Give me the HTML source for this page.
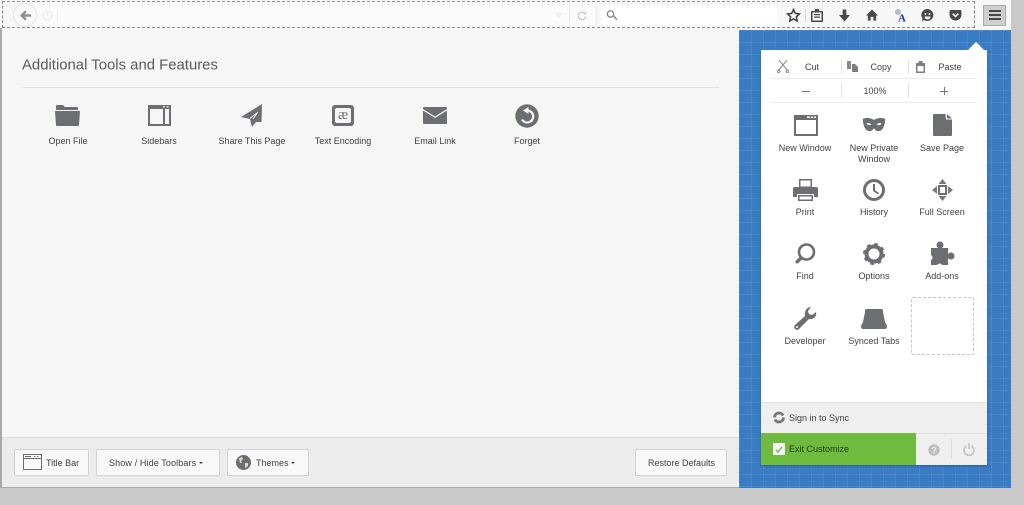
<!DOCTYPE html>
<html><head><meta charset="utf-8"><style>
html,body{margin:0;padding:0}
body{width:1024px;height:505px;overflow:hidden;position:relative;background:#c9c9c9;font-family:"Liberation Sans",sans-serif;color:#333}
div,svg{position:absolute}
.t{position:absolute;font-size:9px;line-height:11px;text-align:center;color:#3f3f3f;white-space:nowrap;transform:translateX(-50%)}
.btn{background:#f8f8f8;border:1px solid #d2d2d2;border-radius:2px;box-sizing:border-box;top:449px;height:27px}
.l{position:absolute;font-size:9px;line-height:11px;color:#3f3f3f;white-space:nowrap}
svg{fill:#6d6e72;filter:blur(.3px)}
.t,.l{filter:blur(.2px)}
</style></head><body>
<div style="left:0;top:0;width:1011px;height:30px;background:#f7f7f7"></div>
<div style="left:0;top:28px;width:2px;height:460px;background:#a9a9a9"></div>
<div style="left:2px;top:30px;width:737px;height:407px;background:#f6f6f6"></div>
<div style="left:2px;top:437px;width:737px;height:51px;background:#ececec;border-top:1px solid #dcdcdc;box-sizing:border-box;border-bottom:1px solid #aaa"></div>
<div style="left:739px;top:30px;width:272px;height:458px;background-color:#3a7cc3;background-image:linear-gradient(rgba(255,255,255,.07) 1px,transparent 1px),linear-gradient(90deg,rgba(255,255,255,.07) 1px,transparent 1px);background-size:12px 12px"></div>

<!-- toolbar -->
<div style="left:2px;top:1px;width:973px;height:27px;border:1px dashed #8c8c8c;box-sizing:border-box"></div>
<div style="left:25px;top:5px;width:570px;height:20px;background:#fbfbfb"></div>
<div style="left:13px;top:3px;width:24px;height:24px;border-radius:50%;background:#f9f9f9;border:1px solid #e4e4e4;box-sizing:border-box"></div>
<svg style="left:20px;top:10px" width="11" height="11" viewBox="0 0 13 12"><path d="M6 0l2 2-2.500 2.500H13v3H5.500L8 10l-2 2-6-6z" fill="#8f8f8f"/></svg>
<svg style="left:42px;top:10px" width="11" height="11" viewBox="0 0 12 12"><circle cx="6" cy="6" r="5" fill="none" stroke="#e8e8e8" stroke-width="1.300"/><path d="M5.300 3h1.400v4H5.300z" fill="#e8e8e8"/></svg>
<div style="left:57px;top:9px;width:1px;height:13px;background:#ececec"></div>
<svg style="left:555px;top:13px" width="7" height="5" viewBox="0 0 7 5"><path d="M0 0h7L3.500 5z" fill="#ececec"/></svg>
<div style="left:569px;top:9px;width:1px;height:13px;background:#e6e6e6"></div>
<svg style="left:577px;top:11px" width="10" height="10" viewBox="0 0 12 11"><path d="M9.500 2.500A4.500 4.500 0 1 0 10.500 6" fill="none" stroke="#c4c4c4" stroke-width="1.400"/><path d="M7 3.500h4V0z" fill="#c4c4c4"/></svg>
<div style="left:596px;top:6px;width:1px;height:19px;background:#ececec"></div>
<div style="left:601px;top:5px;width:176px;height:20px;background:#fff"></div>
<svg style="left:606px;top:10px" width="12" height="11" viewBox="0 0 12 11"><circle cx="4.500" cy="4" r="3.200" fill="none" stroke="#8d8d8d" stroke-width="1.400"/><path d="M6.800 6.300l1.200-1 3.500 3.800-1.300 1.200z" fill="#8d8d8d"/></svg>
<svg style="left:786px;top:8px" width="15" height="15" viewBox="0 0 15 15"><path d="M7.500 1.500l1.800 3.900 4.200.5-3.100 2.900.8 4.200-3.700-2.100-3.700 2.100.8-4.200L1.500 5.900l4.200-.5z" fill="none" stroke="#3f3f42" stroke-width="1.500"/></svg>
<div style="left:805px;top:9px;width:1px;height:13px;background:#d5d5d5"></div>
<svg style="left:811px;top:9px" width="12" height="13" viewBox="0 0 12 13"><path d="M4 0h4v2h3a1 1 0 0 1 1 1v9a1 1 0 0 1-1 1H1a1 1 0 0 1-1-1V3a1 1 0 0 1 1-1h3zM1.500 3.500v8h9v-8zM3 5h6v1.200H3zM3 7.500h6v1.200H3z" fill="#48484b" fill-rule="evenodd"/></svg>
<svg style="left:839px;top:9px" width="11" height="13" viewBox="0 0 12 13"><path d="M4 0h4v6h4l-6 7-6-7h4z" fill="#48484b"/></svg>
<svg style="left:866px;top:9px" width="12" height="13" viewBox="0 0 13 13"><path d="M6.500 0L13 6.500h-2V12H8V8H5v4H2V6.500H0z" fill="#48484b"/></svg>
<svg style="left:893px;top:8px" width="14" height="15" viewBox="0 0 14 15"><circle cx="5" cy="4" r="3" fill="#b8bcc4"/><text x="5" y="13.500" font-family="Liberation Serif" font-size="11" font-weight="bold" style="fill:#2433a8">A</text></svg>
<svg style="left:921px;top:9px" width="13" height="13" viewBox="0 0 13 13"><path d="M6.500 0a6 6 0 1 1-3.500 11L1 12.500l.5-3A6 6 0 0 1 6.500 0z" fill="#48484b"/><circle cx="4.500" cy="5" r="1" fill="#f7f7f7"/><circle cx="8.500" cy="5" r="1" fill="#f7f7f7"/><path d="M3.500 7.500h6a3 3 0 0 1-6 0z" fill="#f7f7f7"/></svg>
<svg style="left:949px;top:10px" width="13" height="11" viewBox="0 0 13 12"><path d="M1.500 0h10A1.500 1.500 0 0 1 13 1.500V5A6.500 6.500 0 0 1 0 5V1.500A1.500 1.500 0 0 1 1.500 0z" fill="#48484b"/><path d="M3.500 4l3 3 3-3" fill="none" stroke="#f7f7f7" stroke-width="1.800"/></svg>
<div style="left:983px;top:5px;width:23px;height:21px;background:#cfcfcf;border:1px solid #a8a8a8;box-sizing:border-box"></div>
<div style="left:989px;top:10px;width:12px;height:2px;background:#47474a"></div>
<div style="left:989px;top:14px;width:12px;height:2px;background:#47474a"></div>
<div style="left:989px;top:18px;width:12px;height:2px;background:#47474a"></div>

<!-- heading -->
<div style="left:22px;top:55px;height:19px;font-size:14.900px;line-height:19px;color:#5a5a5a;white-space:nowrap;padding-top:0;transform:translateY(1.500px)">Additional Tools and Features</div>
<div style="left:22px;top:87px;width:697px;height:1px;background:#e2e2e2"></div>

<!-- palette icons -->
<svg style="left:55px;top:105px" width="25" height="21" viewBox="0 0 25 21"><path d="M1 1a1 1 0 0 1 1-1h6l2 2h12a1 1 0 0 1 1 1v2H1zM0 6h25l-1 14a1 1 0 0 1-1 1H2a1 1 0 0 1-1-1z"/></svg>
<svg style="left:147px;top:105px" width="25" height="21" viewBox="0 0 25 21"><path d="M1 0h23v21H1zM3 4v15h13V4zM18 4v15h4V4zM16 1.200v1.300h2V1.200zM19.500 1.200v1.300h2V1.200z" fill-rule="evenodd"/></svg>
<svg style="left:241px;top:104px" width="22" height="23" viewBox="0 0 22 23"><path d="M21 0l-.5 18H15l-4 5-2-8-9-2z"/><path d="M9 14.500L17 8l-5 7" stroke="#f6f6f6" stroke-width=".9" fill="none"/></svg>
<div style="left:332px;top:105px;width:22px;height:21px;background:#6d6e72;border-radius:3px"></div>
<div style="left:335px;top:108px;width:16px;height:15px;background:#f6f6f6;border-radius:2px;font-size:15px;line-height:14px;text-align:center;color:#6d6e72;font-family:'Liberation Serif',serif">æ</div>
<svg style="left:423px;top:107px" width="24" height="17" viewBox="0 0 24 17"><path d="M1 0h22a1 1 0 0 1 1 1v1L12 9.500 0 2V1a1 1 0 0 1 1-1zM0 3.500l12 7.500 12-7.500V16a1 1 0 0 1-1 1H1a1 1 0 0 1-1-1z"/></svg>
<svg style="left:515px;top:104px" width="24" height="24" viewBox="0 0 24 24"><circle cx="12" cy="12" r="11.700"/><path d="M12 6.500A6 6 0 1 1 7 15.500" fill="none" stroke="#f6f6f6" stroke-width="2.200"/><path d="M13.500 3v7L8 6.500z" fill="#f6f6f6"/></svg>
<div class="t" style="left:68px;top:136px">Open File</div>
<div class="t" style="left:159px;top:136px">Sidebars</div>
<div class="t" style="left:252px;top:136px">Share This Page</div>
<div class="t" style="left:343px;top:136px">Text Encoding</div>
<div class="t" style="left:435px;top:136px">Email Link</div>
<div class="t" style="left:527px;top:136px">Forget</div>

<!-- footer -->
<div class="btn" style="left:14px;width:75px"></div>
<svg style="left:23px;top:454px" width="19" height="16" viewBox="0 0 19 16"><path d="M0 0h19v16H0zM1 5v10h17V5zM1 1v3h17V1z" fill-rule="evenodd"/><path d="M2 2h6v1H2zM11 2h1.500v1H11zM14 2h1.500v1H14z"/></svg>
<div class="l" style="left:46px;top:458px">Title Bar</div>
<div class="btn" style="left:96px;width:124px"></div>
<div class="l" style="left:109px;top:458px;letter-spacing:.12px">Show / Hide Toolbars</div>
<div style="left:199px;top:462px;border:2px solid transparent;border-top:2px solid #444"></div>
<div class="btn" style="left:227px;width:82px"></div>
<svg style="left:236px;top:455px" width="15" height="15" viewBox="0 0 15 15"><circle cx="7.500" cy="7.500" r="7.500"/><path d="M3 3l3-1 1 2-2 2 1 2-2 0zM9 8l3 0 0 3-3 2z" fill="#d8d8d8"/></svg>
<div class="l" style="left:256px;top:458px">Themes</div>
<div style="left:291px;top:462px;border:2px solid transparent;border-top:2px solid #444"></div>
<div class="btn" style="left:635px;width:92px"></div>
<div class="l" style="left:648px;top:458px">Restore Defaults</div>

<!-- panel -->
<div style="left:761px;top:50px;width:226px;height:415px;background:#fff;box-shadow:0 1px 2px rgba(0,0,0,.25)"></div>
<svg style="left:968px;top:42px;fill:#fff" width="16" height="8" viewBox="0 0 16 8"><path d="M0 8L8 0l8 8z" fill="#fff"/></svg>
<div style="left:771px;top:78px;width:206px;height:1px;background:#eaeaea"></div>
<div style="left:771px;top:102px;width:206px;height:1px;background:#eaeaea"></div>
<div style="left:841px;top:59px;width:1px;height:15px;background:#e2e2e2"></div>
<div style="left:908px;top:59px;width:1px;height:15px;background:#e2e2e2"></div>
<div style="left:841px;top:83px;width:1px;height:15px;background:#e2e2e2"></div>
<div style="left:908px;top:83px;width:1px;height:15px;background:#e2e2e2"></div>
<svg style="left:777px;top:60px" width="12" height="13" viewBox="0 0 12 13"><path d="M2 0l9 11M10 0L1 11" stroke="#8a8b8f" stroke-width="1" fill="none"/><circle cx="1.500" cy="11.500" r="1.300" fill="none" stroke="#8a8b8f"/><circle cx="10.500" cy="11.500" r="1.300" fill="none" stroke="#8a8b8f"/></svg>
<svg style="left:847px;top:61px" width="11" height="11" viewBox="0 0 11 11"><path d="M0 0h4v8H0z" fill="#8a8b8f"/><path d="M5 3h3l3 3v5H5z" fill="#7d7e82"/></svg>
<svg style="left:916px;top:61px" width="9" height="12" viewBox="0 0 9 12"><path d="M0 2h2.500V0h4v2H9v10H0zM1.500 5v5.500h6V5z" fill-rule="evenodd" fill="#7d7e82"/></svg>
<div class="t" style="left:812px;top:62px">Cut</div>
<div class="t" style="left:881px;top:62px">Copy</div>
<div class="t" style="left:950px;top:62px">Paste</div>
<div style="left:802px;top:91px;width:8px;height:1px;background:#777"></div>
<div class="t" style="left:875px;top:86px">100%</div>
<div style="left:940px;top:91px;width:8px;height:1px;background:#777"></div>
<div style="left:943.500px;top:87px;width:1px;height:8px;background:#777"></div>

<!-- panel icons -->
<svg style="left:794px;top:115px" width="24" height="21" viewBox="0 0 24 21"><path d="M0 0h24v21H0zM2 5v14h20V5zM13 1.500V3h3V1.500zM17 1.500V3h2V1.500zM20 1.500V3h2V1.500z" fill-rule="evenodd"/></svg>
<svg style="left:862px;top:118px" width="24" height="14" viewBox="0 0 24 15"><path d="M0 1c4-2 8-1 12 1 4-2 8-3 12-1 0 7-3 14-8 13-2 0-3-2-4-3-1 1-2 3-4 3C3 15 0 8 0 1zM4 6c1 2 4 2 5 1-1-2-4-2-5-1zM15 7c1 1 4 1 5-1-1-1-4-1-5 1z" fill-rule="evenodd"/></svg>
<svg style="left:933px;top:114px" width="19" height="22" viewBox="0 0 19 22"><path d="M1 0h11.500l.5 5.500h6V21a1 1 0 0 1-1 1H1a1 1 0 0 1-1-1V1a1 1 0 0 1 1-1zM14 0l5 4.500h-5z"/></svg>
<div class="t" style="left:805px;top:143px">New Window</div>
<div class="t" style="left:874px;top:143px">New Private<br>Window</div>
<div class="t" style="left:942px;top:143px">Save Page</div>

<svg style="left:793px;top:179px" width="25" height="22" viewBox="0 0 25 22"><path d="M6 0h13v8H6z"/><path d="M7.500 1.500v6h10v-6z" fill="#fff"/><path d="M2 8h21a2 2 0 0 1 2 2v8h-4v-3H4v3H0v-8a2 2 0 0 1 2-2z"/><path d="M5 16h15v6H5z"/><path d="M6.500 17.500v3h12v-3z" fill="#fff"/></svg>
<svg style="left:863px;top:179px" width="22" height="22" viewBox="0 0 22 22"><circle cx="11" cy="11" r="9.500" fill="none" stroke="#6d6e72" stroke-width="3"/><path d="M10 5h2v6l4 3-1 1.500-5-3.500z"/></svg>
<svg style="left:932px;top:179px" width="21" height="22" viewBox="0 0 21 22"><path d="M10.500 0l4 5h-8zM10.500 22l-4-5h8zM0 11l5-4v8zM21 11l-5-4v8z" fill="#77787c"/><path d="M6 6h9v10H6zM8 8v6h5V8z" fill-rule="evenodd"/></svg>
<div class="t" style="left:805px;top:207px">Print</div>
<div class="t" style="left:874px;top:207px">History</div>
<div class="t" style="left:942px;top:207px">Full Screen</div>

<svg style="left:795px;top:243px" width="21" height="21" viewBox="0 0 21 21"><circle cx="11.500" cy="9" r="7.500" fill="none" stroke="#6d6e72" stroke-width="2.600"/><path d="M5.500 13l2.500 2.500-4.500 4.500a1.500 1.500 0 0 1-2.500-2.500z"/></svg>
<svg style="left:863px;top:243px" width="22" height="22" viewBox="0 0 22 22"><circle cx="11" cy="11" r="7.500" fill="none" stroke="#6d6e72" stroke-width="4"/><circle cx="11" cy="11" r="9.500" fill="none" stroke="#6d6e72" stroke-width="3" stroke-dasharray="3.500 3.960"/></svg>
<svg style="left:931px;top:241px" width="24" height="25" viewBox="0 0 24 25"><path d="M0 7h17v17H11a2.800 2.800 0 0 0-5 0H0v-5a2.800 2.800 0 0 0 0-5z"/><circle cx="9" cy="4" r="3.500"/><path d="M7 6h4v2H7z"/><circle cx="20" cy="15" r="3.500"/><path d="M16 13h3v4h-3z"/></svg>
<div class="t" style="left:805px;top:271px">Find</div>
<div class="t" style="left:874px;top:271px">Options</div>
<div class="t" style="left:942px;top:271px">Add-ons</div>

<svg style="left:794px;top:307px" width="23" height="23" viewBox="0 0 23 23"><path d="M17 0l-3 4 1 3 3 1 4-3c1 4-2 8-7 7L5 22a2.800 2.800 0 0 1-4-4l10-9c-1-5 2-9 6-9z"/><circle cx="3" cy="20" r="1" fill="#fff"/></svg>
<svg style="left:861px;top:309px" width="26" height="20" viewBox="0 0 26 20"><path d="M6 0h14c2 0 2 1 2 3l2 10c1 2 2 3 2 5 0 1-1 2-2 2H2c-1 0-2-1-2-2 0-2 1-3 2-5L4 3c0-2 0-3 2-3z"/></svg>
<div class="t" style="left:805px;top:336px">Developer</div>
<div class="t" style="left:874px;top:336px">Synced Tabs</div>
<div style="left:911px;top:297px;width:63px;height:58px;border:1px dashed #c4c4c4;border-radius:2px;box-sizing:border-box"></div>

<!-- panel footer -->
<div style="left:761px;top:402px;width:226px;height:31px;background:#efefef;border-top:1px solid #e0e0e0;box-sizing:border-box"></div>
<svg style="left:773px;top:411px" width="12" height="13" viewBox="0 0 12 13"><circle cx="6" cy="6.500" r="4.500" fill="none" stroke="#77787c" stroke-width="2.800" stroke-dasharray="12 2.100"/></svg>
<div class="l" style="left:789px;top:413px">Sign in to Sync</div>
<div style="left:761px;top:433px;width:155px;height:32px;background:#6fbb40"></div>
<div style="left:916px;top:433px;width:71px;height:32px;background:#efefef;border-top:1px solid #e0e0e0;box-sizing:border-box"></div>
<div style="left:773px;top:443px;width:12px;height:12px;background:#f5f5f5;border-radius:1px"></div>
<svg style="left:775px;top:446px;fill:none" width="8" height="7" viewBox="0 0 8 7"><path d="M1 4l2 2 4-5" stroke="#6fbb40" stroke-width="1.400" fill="none"/></svg>
<div class="l" style="left:789px;top:444px;color:#1f3a10">Exit Customize</div>
<svg style="left:928px;top:444px" width="12" height="12" viewBox="0 0 12 12"><circle cx="6" cy="6" r="5.700" fill="#bdbdbd"/><text x="6" y="9.500" text-anchor="middle" font-family="Liberation Sans" font-size="9" font-weight="bold" style="fill:#efefef">?</text></svg>
<div style="left:951px;top:439px;width:1px;height:20px;background:#dcdcdc"></div>
<svg style="left:963px;top:443px" width="12" height="13" viewBox="0 0 12 13"><path d="M3.500 3a5 5 0 1 0 5 0" fill="none" stroke="#c2c2c2" stroke-width="1.600"/><path d="M5.200 0h1.600v6H5.200z" fill="#c2c2c2"/></svg>
</body></html>
